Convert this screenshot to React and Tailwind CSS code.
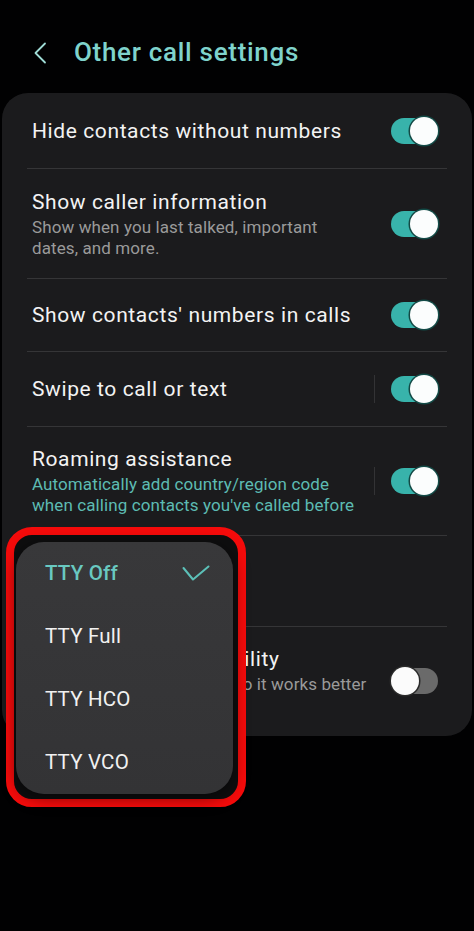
import React from "react";

const font = { fontFamily: "Roboto, 'Noto Sans', 'Liberation Sans', sans-serif" };

function Toggle({ on = true }) {
  if (on) {
    return (
      <div className="flex h-[26px] w-[47px] shrink-0 items-center justify-end rounded-full bg-[#38b3ab]">
        <div className="-my-[2px] h-[28px] w-[28px] rounded-full bg-[#fbfdfd] ring-[1.5px] ring-[#134a46]" />
      </div>
    );
  }
  return (
    <div className="flex h-[26px] w-[47px] shrink-0 items-center justify-start rounded-full bg-[#6a6a6a]">
      <div className="-my-[2px] h-[28px] w-[28px] rounded-full bg-[#fbfbfb] ring-[1.5px] ring-[#2a2a2a]" />
    </div>
  );
}

function Divider() {
  return <div className="mx-[25px] h-px bg-[#353537]" />;
}

function Row({ title, sub, subTeal, h, sep, on = true }) {
  return (
    <div className={`flex items-center pl-[30px] pr-[34px] ${h}`}>
      <div className="flex min-w-0 flex-1 flex-col">
        <div className="text-[21px] leading-[26px] tracking-[0.6px] text-[#f3f3f3]">{title}</div>
        {sub && (
          <div
            className={`mt-[2px] text-[17px] leading-[21px] tracking-[0.1px] ${
              subTeal ? "text-[#5dbbb3]" : "text-[#9a9a9a]"
            }`}
          >
            {sub}
          </div>
        )}
      </div>
      {sep && <div className="mr-[16px] h-[28px] w-px bg-[#333335]" />}
      <Toggle on={on} />
    </div>
  );
}

export default function App() {
  return (
    <div className="relative min-h-[931px] w-full overflow-hidden bg-[#010102]" style={font}>
      {/* header */}
      <div className="flex h-[93px] items-start pt-[36px]">
        <svg className="ml-[33px] mt-[6px]" width="14" height="22" viewBox="0 0 14 22" fill="none">
          <path d="M12 1.5 L2.5 11 L12 20.5" stroke="#9fdcd6" strokeWidth="1.8" strokeLinecap="round" strokeLinejoin="round" />
        </svg>
        <h1 className="ml-[27px] text-[26px] leading-[32px] font-medium tracking-[0.7px] text-[#7fd3cc]">
          Other call settings
        </h1>
      </div>

      {/* settings card */}
      <div className="ml-[2px] w-[470px] rounded-[26px] bg-[#1b1b1d]">
        <Row title="Hide contacts without numbers" h="h-[75px]" />
        <Divider />
        <Row
          title="Show caller information"
          sub={<>Show when you last talked, important<br />dates, and more.</>}
          h="h-[109px]"
        />
        <Divider />
        <Row title="Show contacts' numbers in calls" h="h-[72px]" />
        <Divider />
        <Row title="Swipe to call or text" h="h-[74px]" sep />
        <Divider />
        <Row
          title="Roaming assistance"
          sub={<>Automatically add country/region code<br />when calling contacts you've called before</>}
          subTeal
          h="h-[108px]"
          sep
        />
        <Divider />
        {/* TTY mode row, opened below as a menu */}
        <div className="h-[90px]" />
        <Divider />
        <div className="flex h-[109px] items-start pl-[30px] pr-[34px] pt-[19px]">
          <div className="flex min-w-0 flex-1 flex-col">
            <div className="text-[21px] leading-[26px] tracking-[0.6px] text-[#f3f3f3]">Hearing aid compatibility</div>
            <div className="mt-[2px] whitespace-nowrap text-[17px] leading-[21px] tracking-[0.1px] text-[#9a9a9a]">
              Improve the sound quality so it works better<br />with hearing aids.
            </div>
          </div>
          <div className="mt-[22px]">
            <Toggle on={false} />
          </div>
        </div>
      </div>

      {/* TTY mode menu, outlined */}
      <div className="absolute left-[6px] top-[527px] rounded-[26px] border-[8px] border-[#f50b0b] bg-[#0e0e0f] pb-[5px] pl-[2px] pr-[5px] pt-[7px]">
        <div className="w-[217px] rounded-[28px] bg-gradient-to-b from-[#38383a] to-[#333335] shadow-[0_4px_16px_rgba(0,0,0,0.5)]">
          <div className="flex h-[63px] items-center justify-between pl-[29px] pr-[23px]">
            <span className="text-[20.5px] font-medium tracking-[0.2px] text-[#69c9c1]">TTY Off</span>
            <svg width="28" height="17" viewBox="0 0 28 17" fill="none">
              <path d="M1.5 3 L11 14.5 L26.5 1.5" stroke="#5cc0b8" strokeWidth="2" strokeLinecap="round" strokeLinejoin="round" />
            </svg>
          </div>
          <div className="flex h-[63px] items-center pl-[29px] text-[20.5px] tracking-[0.2px] text-[#f1f1f1]">TTY Full</div>
          <div className="flex h-[63px] items-center pl-[29px] text-[20.5px] tracking-[0.2px] text-[#f1f1f1]">TTY HCO</div>
          <div className="flex h-[63px] items-center pl-[29px] text-[20.5px] tracking-[0.2px] text-[#f1f1f1]">TTY VCO</div>
        </div>
      </div>
    </div>
  );
}
